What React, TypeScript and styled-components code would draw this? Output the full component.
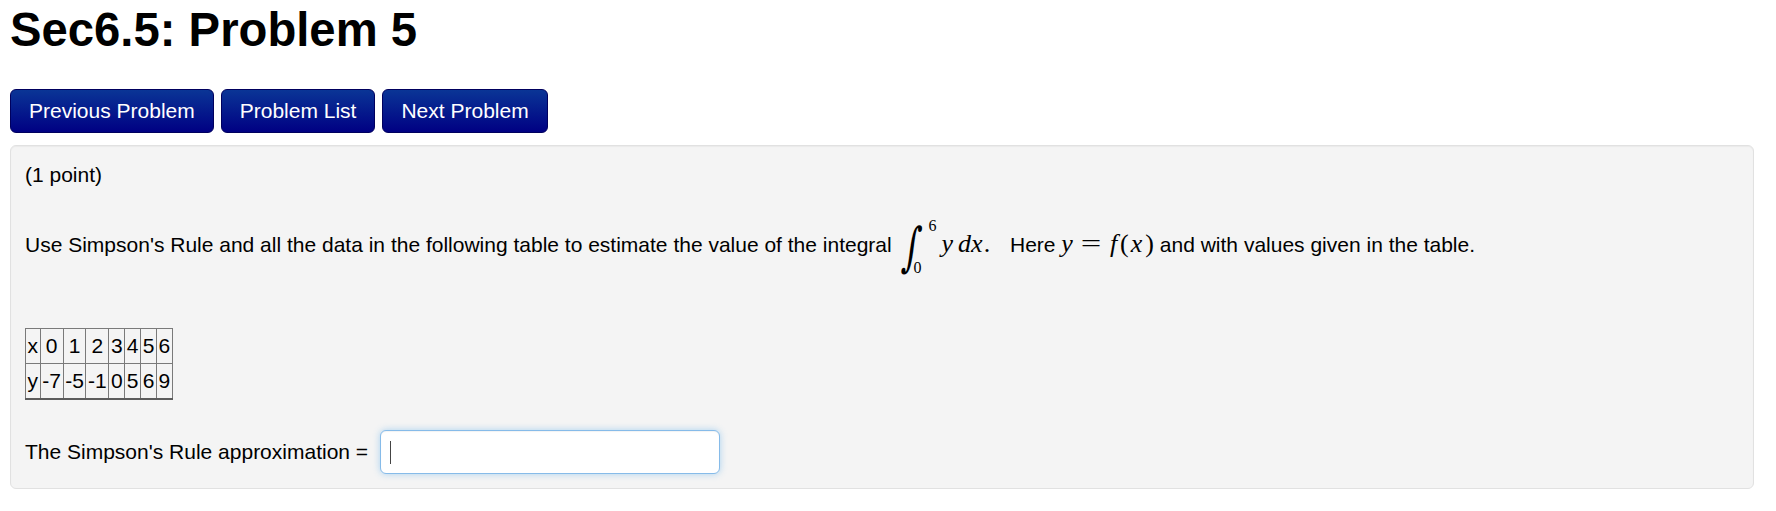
import React from "react";
import styled, { createGlobalStyle } from "styled-components";

const GlobalStyle = createGlobalStyle`
  html, body { margin: 0; padding: 0; background: #ffffff; }
  body {
    font-family: "Liberation Sans", Arial, sans-serif;
    font-size: 21px;
    line-height: 30px;
    color: #000000;
  }
  * { box-sizing: border-box; }
`;

const Page = styled.div`
  display: flex;
  flex-direction: column;
  padding: 0 22px 0 10px;
`;

const Title = styled.h2`
  margin: 0;
  font-size: 47.25px;
  line-height: 60px;
  font-weight: bold;
  color: #000000;
`;

const Nav = styled.nav`
  display: flex;
  gap: 7px;
  margin-top: 29px;
`;

const NavButton = styled.button`
  height: 44px;
  padding: 0 18px;
  border: 1px solid #00005e;
  border-radius: 6px;
  background: linear-gradient(to bottom, #0a3596 0%, #000083 100%);
  color: #ffffff;
  font-family: "Liberation Sans", Arial, sans-serif;
  font-size: 21px;
  line-height: 30px;
  cursor: pointer;
`;

const Panel = styled.div`
  margin-top: 12px;
  padding: 14px;
  background: #f4f4f4;
  border: 1px solid #e1e1e1;
  border-radius: 6px;
  box-shadow: inset 0 1px 1px rgba(0, 0, 0, 0.04);
`;

const Points = styled.div`
  line-height: 30px;
`;

const ProblemText = styled.p`
  margin: 28px 0 0 0;
  line-height: 30px;
`;

const MathInt = styled.span`
  display: inline-flex;
  height: 57px;
  width: 40px;
  vertical-align: middle;
  margin-left: 2px;
`;

const Sign = styled.span`
  flex: none;
  width: 24px;
  height: 57px;
  font-family: "DejaVu Serif", serif;
  font-size: 42px;
  line-height: 57px;
  text-align: center;
  transform: scale(0.8, 1.25) skewX(-10deg);
  transform-origin: center;
`;

const Limits = styled.span`
  display: flex;
  flex-direction: column;
  justify-content: space-between;
  align-items: flex-start;
  margin-left: -10px;
  font-family: "Liberation Serif", "DejaVu Serif", serif;
  font-size: 16px;
  line-height: 14px;
  padding: 1px 0 0 0;
`;

const Limit = styled.span<{ $shift: number }>`
  margin-left: ${(p) => p.$shift}px;
`;

const MathVar = styled.span<{ $gapLeft?: number }>`
  font-family: "Liberation Serif", "DejaVu Serif", serif;
  font-style: italic;
  font-size: 26px;
  margin-left: ${(p) => p.$gapLeft ?? 0}px;
`;

const MathUp = styled.span<{ $gapLeft?: number }>`
  font-family: "Liberation Serif", "DejaVu Serif", serif;
  font-size: 26px;
  margin-left: ${(p) => p.$gapLeft ?? 0}px;
`;

const EqSign = styled.span`
  display: inline-block;
  width: 20px;
  margin: 0 9px 0 8px;
  text-align: center;
  font-family: "Liberation Serif", "DejaVu Serif", serif;
  font-size: 26px;
  transform: scaleX(1.4);
`;

const Spacer = styled.span<{ $w: number }>`
  display: inline-block;
  width: ${(p) => p.$w}px;
`;

const DataTable = styled.table`
  margin-top: 53px;
  border-collapse: collapse;
  border: 1px solid #5c5c5c;
  border-bottom-width: 2px;
`;

const Cell = styled.td`
  border: 1px solid #7a7a7a;
  padding: 2px 1.6px;
  font-size: 21px;
  line-height: 30px;
  text-align: center;
  white-space: nowrap;
`;

const AnswerRow = styled.div`
  display: flex;
  align-items: center;
  gap: 12px;
  margin-top: 30px;
`;

const InputWrap = styled.span`
  position: relative;
  display: inline-block;
`;

const AnswerInput = styled.input`
  display: block;
  width: 340px;
  height: 44px;
  padding: 0 9px;
  border: 1px solid #86bbe9;
  border-radius: 6px;
  background: #ffffff;
  font-family: "Liberation Sans", Arial, sans-serif;
  font-size: 21px;
  outline: none;
  box-shadow: inset 0 1px 1px rgba(0, 0, 0, 0.05), 0 0 7px rgba(82, 168, 236, 0.45);
`;

const Caret = styled.span`
  position: absolute;
  left: 10px;
  top: 11px;
  width: 1px;
  height: 23px;
  background: #444444;
`;

const xs = ["x", "0", "1", "2", "3", "4", "5", "6"];
const ys = ["y", "-7", "-5", "-1", "0", "5", "6", "9"];

export default function App() {
  return (
    <>
      <GlobalStyle />
      <Page>
        <Title>Sec6.5: Problem 5</Title>
        <Nav>
          <NavButton>Previous Problem</NavButton>
          <NavButton>Problem List</NavButton>
          <NavButton>Next Problem</NavButton>
        </Nav>
        <Panel>
          <Points>(1 point)</Points>
          <ProblemText>
            Use Simpson's Rule and all the data in the following table to estimate the value of the integral{" "}
            <MathInt>
              <Sign>∫</Sign>
              <Limits>
                <Limit $shift={15}>6</Limit>
                <Limit $shift={0}>0</Limit>
              </Limits>
            </MathInt>
            <MathVar $gapLeft={2}>y</MathVar>
            <MathVar $gapLeft={5}>d</MathVar>
            <MathVar>x</MathVar>
            <MathUp $gapLeft={1}>.</MathUp>
            <Spacer $w={14} /> Here <MathVar>y</MathVar>
            <EqSign>=</EqSign>
            <MathVar>f</MathVar>
            <MathUp $gapLeft={3}>(</MathUp>
            <MathVar $gapLeft={2}>x</MathVar>
            <MathUp $gapLeft={3}>)</MathUp> and with values given in the table.
          </ProblemText>
          <DataTable>
            <tbody>
              <tr>
                {xs.map((v, i) => (
                  <Cell key={i}>{v}</Cell>
                ))}
              </tr>
              <tr>
                {ys.map((v, i) => (
                  <Cell key={i}>{v}</Cell>
                ))}
              </tr>
            </tbody>
          </DataTable>
          <AnswerRow>
            <span>The Simpson's Rule approximation =</span>
            <InputWrap>
              <AnswerInput type="text" aria-label="answer" />
              <Caret />
            </InputWrap>
          </AnswerRow>
        </Panel>
      </Page>
    </>
  );
}
